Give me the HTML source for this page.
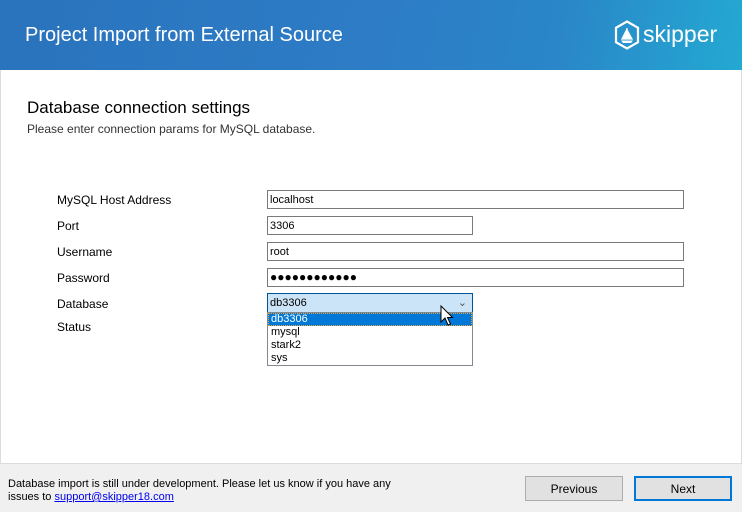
<!DOCTYPE html>
<html><head><style>
body{margin:0;width:742px;height:512px;position:relative;overflow:hidden;background:#f0f0f0;font-family:"Liberation Sans",sans-serif;font-size:12px;color:#000}
.hdr{position:absolute;left:0;top:0;width:742px;height:70px;background:linear-gradient(100deg,#2a73bd 0%,#2d7cc5 50%,#2a86c8 75%,#23a9d2 100%)}
.hdr .t{position:absolute;left:25px;top:24px;color:#fff;font-size:20px}
.logo{position:absolute;left:613px;top:20px}
.logo .s{position:absolute;left:30px;top:1px;color:#fff;font-size:23px}
.panel{position:absolute;left:0;top:70px;width:740px;height:393px;background:#fff;border:1px solid #dcdcdc;border-top:none}
.abs{position:absolute}
.inp{position:absolute;height:18px;border:1px solid #7a7a7a;background:#fff;box-sizing:border-box;font-size:11px;line-height:19px;padding-left:2px}
.lbl{position:absolute;left:57px;font-size:12px}
.btn{position:absolute;top:476px;width:96px;height:25px;box-sizing:border-box;background:#e1e1e1;border:1px solid #adadad;text-align:center;line-height:25px;font-size:12px}
</style></head><body>
<div class="hdr"><div class="t">Project Import from External Source</div>
<div class="logo"><svg width="28" height="30" viewBox="0 0 28 30"><polygon points="14,1.5 25,7.8 25,22.2 14,28.5 3,22.2 3,7.8" fill="none" stroke="#fff" stroke-width="2.2"/><path d="M14 8 L14 19 M14 9 L9 19 L14 19 M14 10 L19 19 L14 19" stroke="#fff" stroke-width="1.3" fill="#fff"/><path d="M8 20.5 L20 20.5 L18 23 L10 23 Z" fill="#fff"/></svg><div class="s">skipper</div></div>
</div>
<div class="panel"></div>
<div class="abs" style="left:27px;top:98px;font-size:17px">Database connection settings</div>
<div class="abs" style="left:27px;top:122px;font-size:12px;color:#333">Please enter connection params for MySQL database.</div>
<div class="lbl" style="top:193px">MySQL Host Address</div>
<div class="lbl" style="top:219px">Port</div>
<div class="lbl" style="top:245px">Username</div>
<div class="lbl" style="top:271px">Password</div>
<div class="lbl" style="top:297px">Database</div>
<div class="lbl" style="top:320px">Status</div>
<div class="inp" style="left:267px;top:190px;width:417px;height:19px">localhost</div>
<div class="inp" style="left:267px;top:216px;width:206px;height:19px">3306</div>
<div class="inp" style="left:267px;top:242px;width:417px;height:19px">root</div>
<div class="inp" style="left:267px;top:268px;width:417px;height:19px;font-size:12px;line-height:17px">●●●●●●●●●●●●</div>
<div class="inp" style="left:267px;top:293px;width:206px;height:20px;background:#cce4f7;border-color:#005499;line-height:19px">db3306<span style="position:absolute;right:5px;top:0;color:#555">⌄</span></div>
<div class="abs" style="left:267px;top:312px;width:206px;height:54px;box-sizing:border-box;border:1px solid #828790;background:#fff;font-size:11px;line-height:13px">
<div style="background:#0078d7;color:#fff;padding-left:3px;outline:1px dotted #e8a33d;outline-offset:-1px">db3306</div>
<div style="padding-left:3px">mysql</div><div style="padding-left:3px">stark2</div><div style="padding-left:3px">sys</div></div>
<svg class="abs" style="left:440px;top:305px" width="14" height="22" viewBox="0 0 14 22"><path d="M1 1 L1 17 L5 13 L8 20 L10.5 19 L7.5 12.5 L12.5 12.5 Z" fill="#fff" stroke="#000" stroke-width="1"/></svg>
<div class="abs" style="left:8px;top:478px;font-size:11px;line-height:13px">Database import is still under development. Please let us know if you have any<br>issues to <span style="color:#00e;text-decoration:underline">support@skipper18.com</span></div>
<div class="btn" style="left:525px;width:98px">Previous</div>
<div class="btn" style="left:634px;width:98px;border:2px solid #0078d7;line-height:23px">Next</div>
</body></html>
